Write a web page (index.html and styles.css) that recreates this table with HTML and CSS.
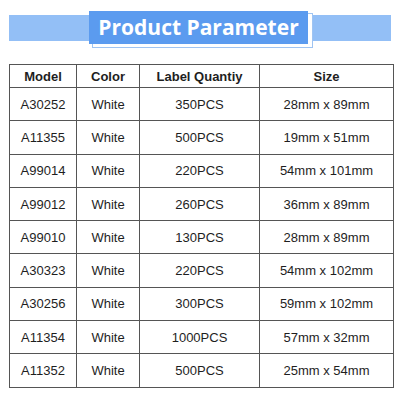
FILE: index.html
```html
<!DOCTYPE html>
<html>
<head>
<meta charset="utf-8">
<link rel="stylesheet" href="styles.css">
</head>
<body>
<div class="page">
  <div class="banner">
    <div class="title">Product Parameter</div>
  </div>
  <table class="params">
    <colgroup>
      <col class="c-model"><col class="c-color"><col class="c-qty"><col class="c-size">
    </colgroup>
    <thead>
      <tr><th>Model</th><th>Color</th><th>Label Quantiy</th><th>Size</th></tr>
    </thead>
    <tbody>
      <tr><td>A30252</td><td>White</td><td>350PCS</td><td>28mm x 89mm</td></tr>
      <tr><td>A11355</td><td>White</td><td>500PCS</td><td>19mm x 51mm</td></tr>
      <tr><td>A99014</td><td>White</td><td>220PCS</td><td>54mm x 101mm</td></tr>
      <tr><td>A99012</td><td>White</td><td>260PCS</td><td>36mm x 89mm</td></tr>
      <tr><td>A99010</td><td>White</td><td>130PCS</td><td>28mm x 89mm</td></tr>
      <tr><td>A30323</td><td>White</td><td>220PCS</td><td>54mm x 102mm</td></tr>
      <tr><td>A30256</td><td>White</td><td>300PCS</td><td>59mm x 102mm</td></tr>
      <tr><td>A11354</td><td>White</td><td>1000PCS</td><td>57mm x 32mm</td></tr>
      <tr><td>A11352</td><td>White</td><td>500PCS</td><td>25mm x 54mm</td></tr>
    </tbody>
  </table>
</div>
</body>
</html>
```
FILE: styles.css
```css
html, body {
  margin: 0;
  padding: 0;
  background: #ffffff;
}
.page {
  width: 400px;
  height: 400px;
  padding: 11px 0 0 0;
  box-sizing: border-box;
}
.banner {
  margin: 0 9px;
  height: 33px;
  display: flex;
  justify-content: center;
  background: linear-gradient(#93bff6, #93bff6) no-repeat 0 4px / 100% 26px;
}
.title {
  width: 219px;
  height: 33px;
  margin-left: -3px;
  box-sizing: border-box;
  background: #5b9bef;
  color: #ffffff;
  font-family: "Open Sans", "DejaVu Sans", sans-serif;
  font-weight: 700;
  font-size: 21px;
  line-height: 33px;
  text-align: center;
  box-shadow: 4px 3px 0 0 #ffffff, 4px 3px 0 1px #9fc4f2;
}
.params {
  margin: 20px 0 0 9px;
  width: 384px;
  border-collapse: collapse;
  table-layout: fixed;
  font-family: "Liberation Sans", Arial, sans-serif;
  font-size: 13px;
  color: #1e1e1e;
}
.c-model { width: 67px; }
.c-color { width: 63px; }
.c-qty { width: 120px; }
.c-size { width: 134px; }
.params th, .params td {
  border: 1px solid #555555;
  text-align: center;
  padding: 0;
}
.params th {
  font-weight: 700;
  height: 22px;
}
.params td {
  height: 32.3px;
}
```
